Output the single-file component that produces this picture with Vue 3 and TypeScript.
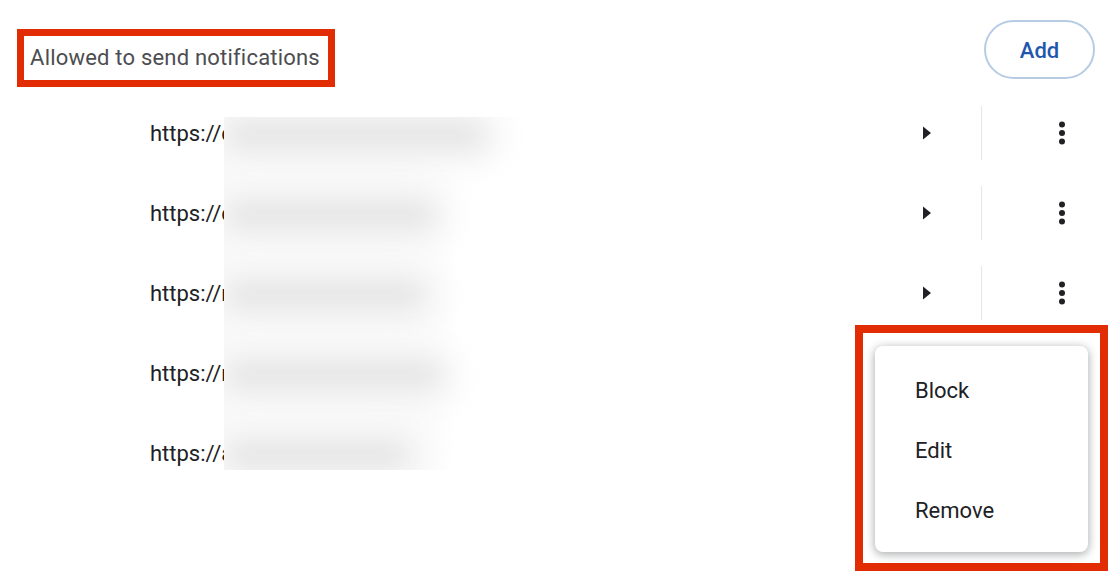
<script setup lang="ts">
interface Site { url: string; blur: number; menu: boolean }
const sites: Site[] = [
  { url: 'https://c', blur: 262, menu: true },
  { url: 'https://c', blur: 212, menu: true },
  { url: 'https://r', blur: 202, menu: true },
  { url: 'https://r', blur: 218, menu: false },
  { url: 'https://a', blur: 186, menu: false },
]
const menuItems = ['Block', 'Edit', 'Remove']
</script>

<template>
  <div class="page">
    <header class="head">
      <h2 class="title">Allowed to send notifications</h2>
      <button class="add">Add</button>
    </header>

    <ul class="list">
      <li v-for="(s, i) in sites" :key="i" class="row">
        <span class="url">{{ s.url }}</span>
        <template v-if="s.menu">
          <svg class="arrow" width="10" height="14" viewBox="0 0 10 14"><path d="M1 0.5 L9 7 L1 13.5 Z" fill="#202124" /></svg>
          <span class="sep"></span>
          <svg class="dots" width="8" height="26" viewBox="0 0 8 26">
            <circle cx="4" cy="4.5" r="3" fill="#202124" />
            <circle cx="4" cy="13" r="3" fill="#202124" />
            <circle cx="4" cy="21.5" r="3" fill="#202124" />
          </svg>
        </template>
      </li>
    </ul>

    <div class="mask" aria-hidden="true">
      <div v-for="(s, i) in sites" :key="i" class="mask-row">
        <span class="smear" :style="{ width: s.blur + 'px' }"></span>
      </div>
    </div>

    <div class="menu-frame">
      <div class="menu">
        <div v-for="m in menuItems" :key="m" class="item">{{ m }}</div>
      </div>
    </div>
  </div>
</template>

<style>
html, body { margin: 0; background: #fff; }
</style>

<style scoped>
.page {
  position: relative;
  width: 1120px;
  height: 584px;
  overflow: hidden;
  background: #fff;
  font-family: Roboto, "Liberation Sans", sans-serif;
  color: #202124;
}
.head {
  display: flex;
  justify-content: space-between;
  align-items: flex-start;
  height: 93px;
  padding: 20px 25px 0 17px;
  box-sizing: border-box;
}
.title {
  margin: 9px 0 0;
  width: 318px;
  height: 58px;
  box-sizing: border-box;
  border: 7px solid #e12c04;
  padding: 0 2px 2px 0;
  display: flex;
  align-items: center;
  justify-content: center;
  font-size: 22px;
  font-weight: 400;
  letter-spacing: 0.2px;
  color: #4c4d50;
  white-space: nowrap;
}
.add {
  width: 111px;
  height: 59px;
  border: 2px solid #b6cbe4;
  border-radius: 30px;
  background: #fff;
  color: #1f57ad;
  font: 500 22px Roboto, "Liberation Sans", sans-serif;
  padding: 2px 0 0;
}
.list { list-style: none; margin: 0; padding: 0; }
.row {
  height: 80px;
  display: flex;
  align-items: center;
  padding-left: 150px;
}
.url { font-size: 22px; flex: 1; color: #202124; }
.arrow { margin-right: 49px; }
.sep { width: 1px; height: 54px; background: #e6e6e6; margin-right: 76px; }
.dots { margin-right: 54px; }
.mask {
  position: absolute;
  left: 224px;
  top: 117px;
  width: 300px;
  height: 353px;
  overflow: hidden;
  background: linear-gradient(90deg, #fafafa 0, #fafafa 60%, #ffffff 78%);
  display: flex;
  flex-direction: column;
}
.mask-row { height: 80px; flex: none; display: flex; align-items: center; }
.mask-row:first-child { margin-top: -22px; }
.smear {
  display: block;
  height: 28px;
  background: #e3e3e3;
  box-shadow: 0 0 0 20px #f8f8f8;
  filter: blur(14px);
  border-radius: 14px;
}
.menu-frame {
  position: absolute;
  left: 855px;
  top: 325px;
  width: 253px;
  height: 246px;
  box-sizing: border-box;
  border: 8px solid #e12c04;
  padding: 13px 12px;
}
.menu {
  width: 213px;
  height: 206px;
  background: #fff;
  border-radius: 8px;
  box-shadow: 0 2px 8px 1px rgba(60, 64, 67, 0.4);
  padding: 15px 0 13px;
  box-sizing: border-box;
}
.item {
  height: 60px;
  line-height: 60px;
  padding-left: 40px;
  font-size: 22px;
  color: #202124;
}
</style>
